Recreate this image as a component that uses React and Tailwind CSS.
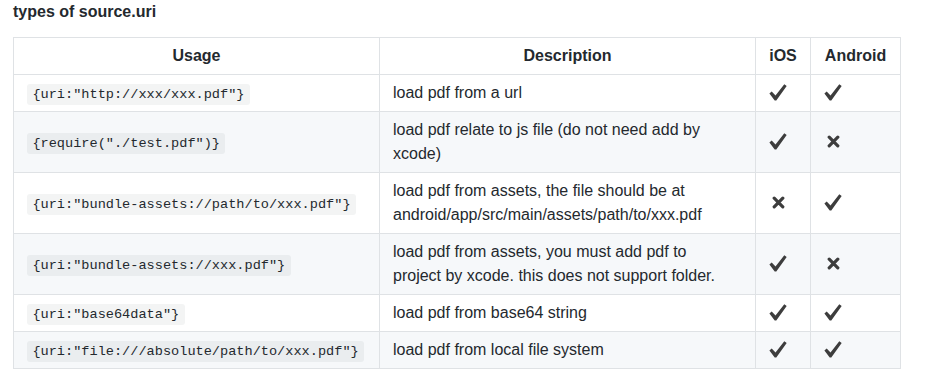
import React from "react";

const rows = [
  { code: '{uri:"http://xxx/xxx.pdf"}', desc: ["load pdf from a url"], ios: true, android: true },
  { code: '{require("./test.pdf")}', desc: ["load pdf relate to js file (do not need add by", "xcode)"], ios: true, android: false },
  { code: '{uri:"bundle-assets://path/to/xxx.pdf"}', desc: ["load pdf from assets, the file should be at", "android/app/src/main/assets/path/to/xxx.pdf"], ios: false, android: true },
  { code: '{uri:"bundle-assets://xxx.pdf"}', desc: ["load pdf from assets, you must add pdf to", "project by xcode. this does not support folder."], ios: true, android: false },
  { code: '{uri:"base64data"}', desc: ["load pdf from base64 string"], ios: true, android: true },
  { code: '{uri:"file:///absolute/path/to/xxx.pdf"}', desc: ["load pdf from local file system"], ios: true, android: true },
];

function Check() {
  return (
    <svg viewBox="0 0 18 17" className="block w-[18px] h-[17px] -translate-y-[1px]">
      <path d="M0.4 9.6 L2.7 7.5 L6.5 11.4 L15.3 0.3 L17.7 2.1 L7.3 16.6 L5.7 16.6 Z" fill="#3d3d3d" />
    </svg>
  );
}

function Cross() {
  return (
    <svg viewBox="0 0 13 13" className="block w-[13px] h-[13px] ml-[3px] -translate-y-[1px]">
      <path d="M2.2 2.2 L10.8 10.8 M10.8 2.2 L2.2 10.8" stroke="#3d3d3d" strokeWidth="3.2" strokeLinecap="round" />
    </svg>
  );
}

function Mark({ ok }) {
  return <div className="flex items-center h-6">{ok ? <Check /> : <Cross />}</div>;
}

export default function App() {
  const cell = "border border-[#dfe2e5] px-[13px] py-[6px]";
  return (
    <div className="bg-white min-h-screen px-[13px] text-[16px] leading-6 text-[#24292e] font-['Liberation_Sans',Helvetica,Arial,sans-serif]">
      <h4 className="font-bold text-[16px] leading-6 mb-[13px]">types of source.uri</h4>
      <table className="border-collapse table-fixed w-[887px]">
        <colgroup>
          <col className="w-[366px]" />
          <col className="w-[376px]" />
          <col className="w-[55px]" />
          <col className="w-[90px]" />
        </colgroup>
        <thead>
          <tr>
            <th className={`${cell} font-bold text-center`}>Usage</th>
            <th className={`${cell} font-bold text-center`}>Description</th>
            <th className={`${cell} font-bold text-center`}>iOS</th>
            <th className={`${cell} font-bold text-center`}>Android</th>
          </tr>
        </thead>
        <tbody>
          {rows.map((r, i) => (
            <tr key={i} className={i % 2 === 1 ? "bg-[#f6f8fa]" : "bg-white"}>
              <td className={`${cell} align-middle`}>
                <code className="rounded-[3px] bg-[rgba(27,31,35,0.05)] px-[5.4px] py-[3px] text-[13.6px] leading-4 font-['Liberation_Mono',Menlo,monospace]">
                  {r.code}
                </code>
              </td>
              <td className={`${cell} align-middle`}>
                {r.desc.map((line, j) => (
                  <React.Fragment key={j}>
                    {j > 0 && <br />}
                    {line}
                  </React.Fragment>
                ))}
              </td>
              <td className={`${cell} align-middle`}>
                <Mark ok={r.ios} />
              </td>
              <td className={`${cell} align-middle`}>
                <Mark ok={r.android} />
              </td>
            </tr>
          ))}
        </tbody>
      </table>
    </div>
  );
}
